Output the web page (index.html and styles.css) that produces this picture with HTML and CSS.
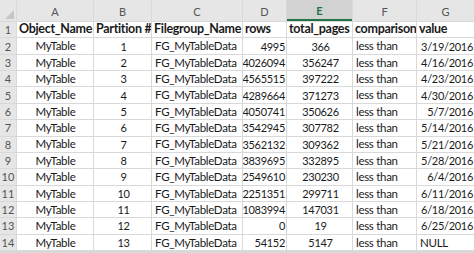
FILE: index.html
```html
<!DOCTYPE html>
<html>
<head>
<meta charset="utf-8">
<link rel="stylesheet" href="styles.css">
</head>
<body>
<div class="sheet">
  <div class="corner"><span class="tri"></span></div>
  <div class="ch">A</div><div class="ch">B</div><div class="ch">C</div><div class="ch">D</div><div class="ch sel">E</div><div class="ch">F</div><div class="ch">G</div>

  <div class="rh">1</div><div class="c b l">Object_Name</div><div class="c b l">Partition #</div><div class="c b l">Filegroup_Name</div><div class="c b l">rows</div><div class="c b l">total_pages</div><div class="c b l">comparison</div><div class="c b l">value</div>

  <div class="rh">2</div><div class="c m">MyTable</div><div class="c n m">1</div><div class="c l">FG_MyTableData</div><div class="c n r">4995</div><div class="c n m">366</div><div class="c l">less than</div><div class="c n r">3/19/2016</div>
  <div class="rh">3</div><div class="c m">MyTable</div><div class="c n m">2</div><div class="c l">FG_MyTableData</div><div class="c n r">4026094</div><div class="c n m">356247</div><div class="c l">less than</div><div class="c n r">4/16/2016</div>
  <div class="rh">4</div><div class="c m">MyTable</div><div class="c n m">3</div><div class="c l">FG_MyTableData</div><div class="c n r">4565515</div><div class="c n m">397222</div><div class="c l">less than</div><div class="c n r">4/23/2016</div>
  <div class="rh">5</div><div class="c m">MyTable</div><div class="c n m">4</div><div class="c l">FG_MyTableData</div><div class="c n r">4289664</div><div class="c n m">371273</div><div class="c l">less than</div><div class="c n r">4/30/2016</div>
  <div class="rh">6</div><div class="c m">MyTable</div><div class="c n m">5</div><div class="c l">FG_MyTableData</div><div class="c n r">4050741</div><div class="c n m">350626</div><div class="c l">less than</div><div class="c n r">5/7/2016</div>
  <div class="rh">7</div><div class="c m">MyTable</div><div class="c n m">6</div><div class="c l">FG_MyTableData</div><div class="c n r">3542945</div><div class="c n m">307782</div><div class="c l">less than</div><div class="c n r">5/14/2016</div>
  <div class="rh">8</div><div class="c m">MyTable</div><div class="c n m">7</div><div class="c l">FG_MyTableData</div><div class="c n r">3562132</div><div class="c n m">309362</div><div class="c l">less than</div><div class="c n r">5/21/2016</div>
  <div class="rh">9</div><div class="c m">MyTable</div><div class="c n m">8</div><div class="c l">FG_MyTableData</div><div class="c n r">3839695</div><div class="c n m">332895</div><div class="c l">less than</div><div class="c n r">5/28/2016</div>
  <div class="rh">10</div><div class="c m">MyTable</div><div class="c n m">9</div><div class="c l">FG_MyTableData</div><div class="c n r">2549610</div><div class="c n m">230230</div><div class="c l">less than</div><div class="c n r">6/4/2016</div>
  <div class="rh">11</div><div class="c m">MyTable</div><div class="c n m">10</div><div class="c l">FG_MyTableData</div><div class="c n r">2251351</div><div class="c n m">299711</div><div class="c l">less than</div><div class="c n r">6/11/2016</div>
  <div class="rh">12</div><div class="c m">MyTable</div><div class="c n m">11</div><div class="c l">FG_MyTableData</div><div class="c n r">1083994</div><div class="c n m">147031</div><div class="c l">less than</div><div class="c n r">6/18/2016</div>
  <div class="rh">13</div><div class="c m">MyTable</div><div class="c n m">12</div><div class="c l">FG_MyTableData</div><div class="c n r">0</div><div class="c n m">19</div><div class="c l">less than</div><div class="c n r">6/25/2016</div>
  <div class="rh">14</div><div class="c m">MyTable</div><div class="c n m">13</div><div class="c l">FG_MyTableData</div><div class="c n r">54152</div><div class="c n m">5147</div><div class="c l">less than</div><div class="c l">NULL</div>
</div>
</body>
</html>
```

FILE: styles.css
```css
html, body {
  margin: 0;
  padding: 0;
  background: #ffffff;
}

.sheet {
  display: grid;
  grid-template-columns: 16px 76px 57px 90px 43px 65px 63px 57px;
  grid-template-rows: 21px repeat(14, 15.36px);
  column-gap: 1px;
  row-gap: 1px;
  background: #d9d9d9;
  width: 474px;
  height: 253px;
  overflow: hidden;
  font-family: Lato, "Liberation Sans", sans-serif;
  font-size: 11.5px;
  letter-spacing: -0.3px;
  color: #1a1a1a;
}

.corner {
  background: #e6e6e6;
  position: relative;
}

.tri {
  position: absolute;
  right: 2px;
  bottom: 2px;
  width: 0;
  height: 0;
  border-left: 9px solid transparent;
  border-bottom: 9px solid #c6c6c6;
}

.ch {
  background: #e6e6e6;
  color: #555555;
  font-size: 11px;
  letter-spacing: 0;
  display: flex;
  align-items: center;
  justify-content: center;
  padding-top: 2px;
  box-sizing: border-box;
}

.ch.sel {
  background: #d2d2d2;
  color: #217346;
  border-bottom: 2px solid #217346;
  font-weight: 700;
}

.rh {
  background: #e6e6e6;
  color: #555555;
  font-size: 11px;
  letter-spacing: 0;
  display: flex;
  align-items: center;
  justify-content: center;
}

.c {
  background: #ffffff;
  display: flex;
  align-items: center;
  white-space: nowrap;
  overflow: hidden;
  padding: 0 2px 0 3px;
  box-sizing: border-box;
  line-height: 1;
}

.c.n {
  font-size: 11px;
  letter-spacing: -0.3px;
  padding-right: 1px;
}

.c.l { justify-content: flex-start; }
.c.m { justify-content: center; }
.c.r { justify-content: flex-end; }
.c.b { font-weight: 700; font-size: 12.5px; letter-spacing: -0.3px; padding-left: 2px; }
```
